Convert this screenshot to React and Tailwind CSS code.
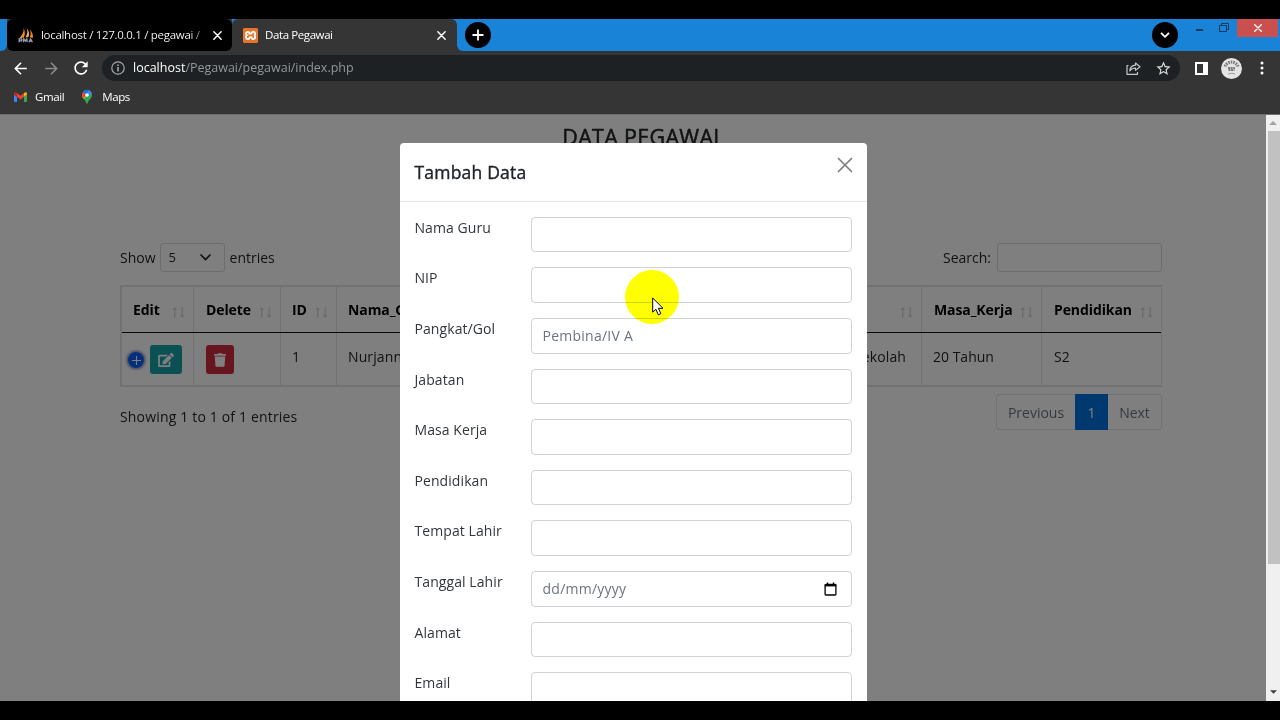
import React from "react";
import { MdArrowBack, MdArrowForward, MdRefresh, MdStarBorder } from "react-icons/md";
import { FaEdit, FaTrash } from "react-icons/fa";
import { SiXampp } from "react-icons/si";

const COLUMNS = [
  { name: "Edit", width: "w-[72px]", pad: "pl-[11px]" },
  { name: "Delete", width: "w-[87px]", pad: "pl-[12px]" },
  { name: "ID", width: "w-[56px]", pad: "pl-[11px]" },
  { name: "Nama_Guru", width: "w-[132px]", pad: "pl-[11px]" },
  { name: "NIP", width: "w-[180px]", pad: "pl-[11px]" },
  { name: "Pangkat/Gol", width: "w-[146px]", pad: "pl-[11px]" },
  { name: "Jabatan", width: "w-[127px]", pad: "pl-[11px]" },
  { name: "Masa_Kerja", width: "w-[120px]", pad: "pl-[12px]" },
  { name: "Pendidikan", width: "w-[119px]", pad: "pl-[12px]" },
];

const FIELDS = [
  { label: "Nama Guru" },
  { label: "NIP" },
  { label: "Pangkat/Gol", placeholder: "Pembina/IV A" },
  { label: "Jabatan" },
  { label: "Masa Kerja" },
  { label: "Pendidikan" },
  { label: "Tempat Lahir" },
  { label: "Tanggal Lahir", placeholder: "dd/mm/yyyy", date: true },
  { label: "Alamat" },
  { label: "Email" },
];

const CloseX = ({ className, width = 1.6 }) => (
  <svg viewBox="0 0 16 16" className={className} fill="none" stroke="currentColor" strokeWidth={width} strokeLinecap="round">
    <path d="M1.5 1.5 14.5 14.5M14.5 1.5 1.5 14.5" />
  </svg>
);

const BoatIcon = () => (
  <svg viewBox="0 0 16 16" className="w-4 h-4 shrink-0">
    <path d="M5.6 1C6 5 4.200 8.600.8 11.800l5-1.200C7.400 7.400 7 4 5.600 1Z" fill="#f0931e" />
    <path d="M8.400 .8c1.600 3 1.200 6.400-1 9.400l3-.2C11.800 7 11 3.600 8.400.8Z" fill="#f6b04c" />
    <path d="M11.600 2.200c1.400 2.800 1.400 5.400.2 8l3 .8C15.400 8 14.200 4.800 11.600 2.200Z" fill="#e98a1d" />
    <path d="M1.200 15.200v-3.400h2.200l.6 1-.6 1H1.200M5.400 15.200l.4-3.400 1.500 2.200 1.500-2.200.4 3.400M10.800 15.200l1.800-3.400 1.800 3.400M11.600 14.200h2" fill="none" stroke="#9a9cb4" strokeWidth="1.300" />
  </svg>
);

const GmailIcon = () => (
  <svg viewBox="0 0 24 18" className="w-[13px] h-[10px]">
    <path d="M1.600 18H5.500V8.700L0 4.600v11.800C0 17.300.7 18 1.600 18Z" fill="#4285f4" />
    <path d="M18.500 18h3.900c.9 0 1.600-.7 1.600-1.600V4.600l-5.500 4.100Z" fill="#34a853" />
    <path d="M18.500 1.600v7.100L24 4.600V2.500c0-2-2.300-3.200-3.900-2Z" fill="#fbbc04" />
    <path d="M5.500 8.700V1.600L12 6.500l6.500-4.900v7.100L12 13.600Z" fill="#ea4335" />
    <path d="M0 2.500v2.100l5.500 4.100V1.600L3.900.5C2.300-.7 0 .5 0 2.500Z" fill="#c5221f" />
  </svg>
);

const MapsIcon = () => (
  <svg viewBox="0 0 20 28" className="w-[10px] h-[14px]">
    <clipPath id="pin">
      <path d="M10 0a10 10 0 0 1 10 10c0 7-7 9-9 17.200-.3 1.100-1.700 1.100-2 0C7 19 0 17 0 10A10 10 0 0 1 10 0Z" />
    </clipPath>
    <g clipPath="url(#pin)">
      <path d="M0 0h20v28H0Z" fill="#34a853" />
      <path d="M10 10 1 20-4 14 4 6Z" fill="#fbbc04" />
      <path d="M3 3 10 9 3 16-3 12Z" fill="#ea4335" />
      <path d="M2 4 10 10 18 0H5Z" fill="#1a73e8" />
      <path d="M13 0h9v6l-9 6-3-2Z" fill="#4285f4" />
    </g>
    <circle cx="10" cy="10" r="3.600" fill="#fff" />
  </svg>
);

const InfoIcon = () => (
  <svg viewBox="0 0 14 14" className="w-[14px] h-[14px] shrink-0" fill="none" stroke="#a4a7aa" strokeWidth="1.200">
    <circle cx="7" cy="7" r="6.200" />
    <path d="M7 6v4.500M7 3.500v1.400" strokeWidth="1.600" />
  </svg>
);

const ShareIcon = () => (
  <svg viewBox="0 0 15 13" className="w-[15px] h-[13px]" fill="none" stroke="#c4c6c8" strokeWidth="1.200" strokeLinejoin="round">
    <path d="M2.500 3.500H1v8.800h10.500v-2.300" />
    <path d="M9.500 1 14 4.700 9.500 8.400V6.200C7 6 5.200 6.800 3.800 8.800 4 5.600 6 3.400 9.500 3.200Z" />
  </svg>
);

const SortArrows = () => (
  <svg viewBox="0 0 14 12" className="w-[13px] h-[11px] shrink-0 mt-[6px]" fill="none" stroke="#cdcdcd" strokeWidth="1.100">
    <path d="M3 12V1M1.200 3 3 1l1.800 2" />
    <path d="M11 0v11M9.200 9l1.800 2 1.800-2" />
  </svg>
);

const CalendarIcon = () => (
  <svg viewBox="0 0 13 14" className="w-[13px] h-[14px]" fill="none" stroke="#000">
    <rect x="1.100" y="2.500" width="10.800" height="10.500" rx=".8" strokeWidth="1.300" />
    <path d="M.8 3.300h11.400" strokeWidth="2.200" />
    <path d="M3.500 .5v2M9.500 .5v2" strokeWidth="1.400" />
  </svg>
);

const TabStrip = () => (
  <div className="h-8 bg-[#1883d7] flex text-white text-[11.5px]">
    <div className="flex bg-[#353535]">
      <div className="w-[7px] bg-[#1883d7] rounded-br-md" />
      <div className="w-[225px] bg-black rounded-md flex items-center pl-[11px]">
        <BoatIcon />
        <span className="ml-[7px] w-[164px] whitespace-nowrap tracking-[-0.3px] bg-linear-to-r from-white from-90% to-[#555] to-100% bg-clip-text text-transparent">
          localhost / 127.0.0.1 / pegawai /
        </span>
        <CloseX className="w-[9px] h-[9px] ml-[8px]" width={2.6} />
      </div>
    </div>
    <div className="w-[225px] bg-[#353535] rounded-t-md flex items-center pl-[11px]">
      <span className="w-[15px] h-[15px] bg-white rounded-[3px] shrink-0 flex">
        <SiXampp className="w-[15px] h-[15px] text-[#e8722a]" />
      </span>
      <span className="ml-[7px] tracking-[-0.4px]">Data Pegawai</span>
      <CloseX className="w-[9px] h-[9px] ml-auto mr-[11px]" width={2.6} />
    </div>
    <div className="flex-1 bg-[#353535]">
      <div className="h-8 bg-[#1883d7] rounded-bl-md flex">
        <div className="w-[26px] h-[26px] ml-[8px] mt-[3px] rounded-full bg-black flex items-center justify-center">
          <svg viewBox="0 0 12 12" className="w-3 h-3" stroke="#fff" strokeWidth="1.800">
            <path d="M6 .5v11M.5 6h11" />
          </svg>
        </div>
        <div className="w-[26px] h-[26px] ml-auto mt-[3px] rounded-full bg-black flex items-center justify-center">
          <svg viewBox="0 0 10 6" className="w-[10px] h-[6px]" fill="none" stroke="#fff" strokeWidth="1.800">
            <path d="m1 .8 4 4 4-4" />
          </svg>
        </div>
        <div className="w-[7px] h-[2px] bg-[#12395a] ml-[18px] mt-[10px]" />
        <svg viewBox="0 0 10 9" className="w-[10px] h-[9px] ml-[16px] mt-1" fill="none" stroke="#12395a">
          <path d="M.5 2.500h7v6h-7ZM2.500 2.500v-2h7v6h-2" />
        </svg>
        <div className="w-[41px] h-[18px] bg-[#c9504f] ml-[8px] mr-[2px] flex items-center justify-center">
          <CloseX className="w-[8px] h-[8px]" width={2.8} />
        </div>
      </div>
    </div>
  </div>
);

const Toolbar = () => (
  <div className="h-[34px] flex items-center text-white">
    <MdArrowBack className="w-[19px] h-[19px] ml-[11px]" />
    <MdArrowForward className="w-[19px] h-[19px] ml-[12px] text-[#8a8a8a]" />
    <MdRefresh className="w-[20px] h-[20px] ml-[10px]" />
    <div className="ml-[11px] w-[1078px] h-[26px] rounded-full bg-[#1e2123] flex items-center pl-[9px] pr-[8px]">
      <InfoIcon />
      <span className="ml-[8px] text-[12.5px] text-[#92969a]">
        <span className="text-white">localhost</span>/Pegawai/pegawai/index.php
      </span>
      <span className="ml-auto flex items-center gap-[14px]">
        <ShareIcon />
        <MdStarBorder className="w-[17px] h-[17px] text-[#dcdcdc]" />
      </span>
    </div>
    <div className="w-[13px] h-[13px] ml-[15px] border-2 border-r-[5px] border-white" />
    <div className="w-[21px] h-[21px] ml-[13px] rounded-full bg-[#e4e4e4]">
      <svg viewBox="0 0 21 21" className="w-full h-full">
        <path d="M4 8.500A7 7 0 0 1 17 8.500" fill="none" stroke="#777" strokeWidth="3" strokeDasharray="1.500 1" />
        <path d="M7 10h7M7.500 12h6" stroke="#555" strokeWidth="1.300" strokeDasharray="2 .6" />
        <path d="M7 16q4-1.500 7 0" fill="none" stroke="#999" />
      </svg>
    </div>
    <svg viewBox="0 0 4 14" className="w-1 h-[14px] ml-[18px]" fill="#fff">
      <circle cx="2" cy="2" r="1.500" />
      <circle cx="2" cy="7" r="1.500" />
      <circle cx="2" cy="12" r="1.500" />
    </svg>
  </div>
);

const Bookmarks = () => (
  <div className="h-[30px] pb-[5px] flex items-center text-white text-[11.5px] tracking-[-0.4px] border-b border-[#6e6e6e]">
    <span className="ml-[14px] flex">
      <GmailIcon />
    </span>
    <span className="ml-[8px]">Gmail</span>
    <span className="ml-[18px] flex">
      <MapsIcon />
    </span>
    <span className="ml-[10px]">Maps</span>
  </div>
);

const EmployeePage = () => (
  <div className="w-[1042px] ml-[120px] text-[#212529] tracking-[0.12px]">
    <h1 className="pt-[5px] h-[128px] text-center text-[21.5px] leading-[33px] font-normal tracking-[0.3px] [-webkit-text-stroke:0.5px_#212529]">
      DATA PEGAWAI
    </h1>
    <div className="flex justify-between items-center h-[29px]">
      <div className="flex items-center tracking-normal">
        Show
        <span className="w-[65px] h-[29px] ml-1 mr-[5px] border border-[#d6dade] rounded-[3px] flex items-center justify-between pl-2 pr-[13px] text-[13px]">
          5
          <svg viewBox="0 0 11 7" className="w-[11px] h-[7px]" fill="none" stroke="#212529" strokeWidth="1.700" strokeLinecap="round">
            <path d="m1 1 4.500 4.500L10 1" />
          </svg>
        </span>
        entries
      </div>
      <div className="flex items-center tracking-normal">
        Search:
        <span className="w-[165px] h-[29px] ml-[6px] border border-[#d6dade] rounded-[3px]" />
      </div>
    </div>

    <div className="mt-[13px] h-[102px] border-2 border-r border-[#e2e4e6]">
      <div className="flex h-[46px] border-b border-[#111] font-bold text-black">
        {COLUMNS.map((c) => (
          <div
            key={c.name}
            className={`${c.width} ${c.pad} pr-[8px] shrink-0 flex items-center justify-between border-r border-[#e2e4e6] last:border-r-0`}
          >
            <span className="text-[14px] tracking-[-0.1px]">{c.name}</span>
            <SortArrows />
          </div>
        ))}
      </div>
      <div className="flex h-[52px] leading-[22px]">
        <div className="w-[72px] border-r border-[#e2e4e6] flex items-start pt-[12px]">
          <span className="mt-[6px] ml-[5px] w-[18px] h-[18px] rounded-full border border-white/60 bg-[#0d5cf5] shadow-[0_0_3px_#555] flex items-center justify-center">
            <svg viewBox="0 0 9 9" className="w-[9px] h-[9px]" stroke="#fff" strokeWidth="1.100">
              <path d="M4.500 0v9M0 4.500h9" />
            </svg>
          </span>
          <span className="ml-[5px] w-[32px] h-[29px] rounded-[3px] bg-[#17a2a8] text-white flex items-center justify-center">
            <FaEdit className="w-[16px] h-[14px]" />
          </span>
        </div>
        <div className="w-[87px] border-r border-[#e2e4e6] pt-[12px] pl-[12px]">
          <span className="w-[28px] h-[29px] rounded-[3px] bg-[#cf2c40] text-white flex items-center justify-center">
            <FaTrash className="w-[12px] h-[14px]" />
          </span>
        </div>
        <div className="w-[56px] border-r border-[#e2e4e6] pt-[13px] pl-[11px]">1</div>
        <div className="w-[132px] border-r border-[#e2e4e6] pt-[13px] pl-[11px]">Nurjannah</div>
        <div className="w-[180px] border-r border-[#e2e4e6]" />
        <div className="w-[146px] border-r border-[#e2e4e6]" />
        <div className="w-[127px] border-r border-[#e2e4e6] pt-[13px] pr-[15px] text-right whitespace-nowrap">
          Kepala Sekolah
        </div>
        <div className="w-[120px] border-r border-[#e2e4e6] pt-[13px] pl-[11px] tracking-normal">20 Tahun</div>
        <div className="pt-[13px] pl-[12px]">S2</div>
      </div>
    </div>

    <div className="flex justify-between">
      <span className="mt-[19px] leading-[22px] tracking-[0.17px]">Showing 1 to 1 of 1 entries</span>
      <div className="mt-[7px] h-[36px] flex items-center text-[#6c757d] tracking-normal border border-[#e2e4e6] rounded-[3px]">
        <span className="w-[78px] text-center">Previous</span>
        <span className="w-[33px] h-[36px] bg-[#0070e0] text-white flex items-center justify-center">1</span>
        <span className="w-[53px] text-center">Next</span>
      </div>
    </div>
  </div>
);

const AddModal = () => (
  <div className="w-[467px] mt-[28px] mx-auto bg-white rounded-t-[4px] text-[#212529]">
    <div className="h-[59px] border-b border-[#e3e6e9] flex justify-between pl-[15px] pr-[14px]">
      <h2 className="text-[17.5px] leading-[59px] font-normal tracking-[0.2px] [-webkit-text-stroke:0.4px_#212529]">
        Tambah Data
      </h2>
      <CloseX className="w-[16px] h-[16px] mt-[14px] text-[#7d7d7d]" width={1.7} />
    </div>
    <div className="pt-[14.8px] pl-[15px] pr-[15px] tracking-[0.08px]">
      {FIELDS.map((f) => (
        <div key={f.label} className="flex mb-[15px] h-[35.6px]">
          <label className="w-[116px] leading-[22.4px] text-[#33373b]">{f.label}</label>
          <div className="flex-1 border border-[#ced4da] rounded-[4px] flex items-center justify-between pl-[11px] pr-[14px] text-[#6c757d] tracking-[0.25px]">
            {f.placeholder}
            {f.date && <CalendarIcon />}
          </div>
        </div>
      ))}
    </div>
  </div>
);

const Scrollbar = () => (
  <div className="w-[14px] bg-[#f0f0f0] flex flex-col items-center justify-between">
    <div className="w-full">
      <div className="h-[16px] flex items-center justify-center">
        <svg viewBox="0 0 8 4" className="w-[8px] h-[4px]" fill="#a3a3a3">
          <path d="M4 0 8 4H0Z" />
        </svg>
      </div>
      <div className="h-[433px] ml-[2px] bg-[#c1c1c1]" />
    </div>
    <svg viewBox="0 0 8 4" className="w-[7px] h-[4px] mb-[7px]" fill="#404040">
      <path d="M4 4 8 0H0Z" />
    </svg>
  </div>
);

const App = () => {
  return (
    <div className="w-[1280px] h-[720px] bg-black py-[19px] overflow-hidden relative font-['Open_Sans',sans-serif]">
      <div className="h-[96px] bg-[#353535]">
        <TabStrip />
        <Toolbar />
        <Bookmarks />
      </div>
      <div className="h-[586px] flex overflow-hidden">
        <div className="w-[1266px] h-full relative bg-white overflow-hidden text-[14px]">
          <EmployeePage />
          <div className="absolute inset-0 bg-black/50 overflow-hidden">
            <AddModal />
          </div>
        </div>
        <Scrollbar />
      </div>

      {/* Pointer with click highlight */}
      <div className="absolute left-[625px] top-[270px] w-[54px] h-[54px] rounded-full bg-[#ffff00] mix-blend-multiply" />
      <svg viewBox="0 0 12 19" className="absolute left-[652px] top-[297px] w-[12px] h-[19px]">
        <path d="M.7 1v14.200l3.200-3 2.400 5.600 2.500-1.100-2.400-5.400H11Z" fill="#fff" stroke="#000" strokeWidth="1" />
      </svg>
    </div>
  );
};

export default App;
